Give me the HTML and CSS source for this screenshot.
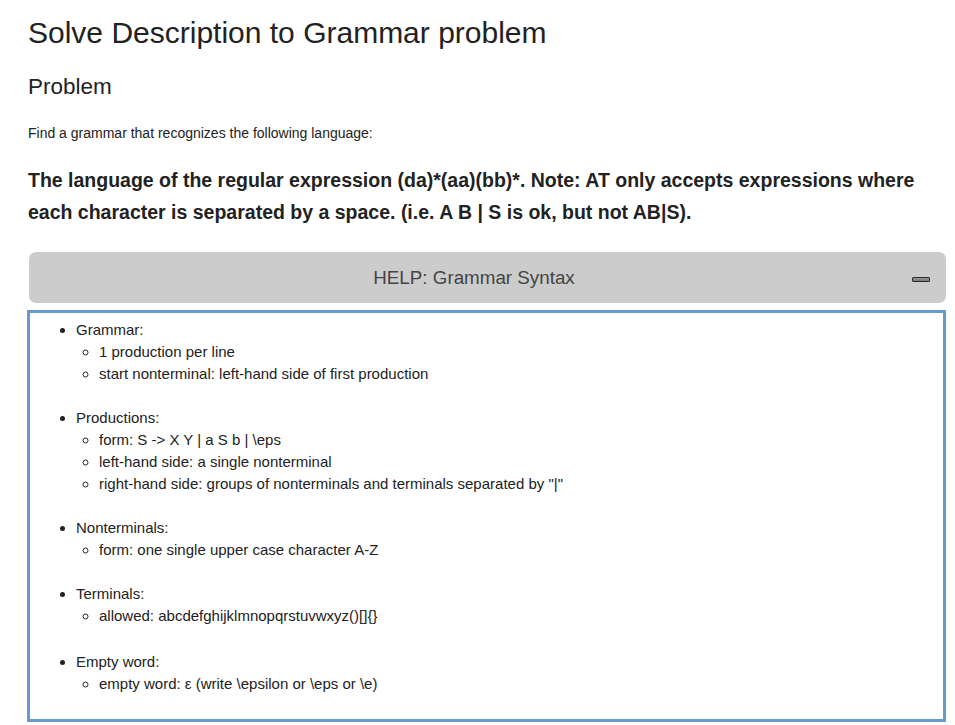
FILE: index.html
```html
<!DOCTYPE html>
<html>
<head>
<meta charset="utf-8">
<link rel="stylesheet" href="styles.css">
</head>
<body>
<div class="page">
  <h1 class="title">Solve Description to Grammar problem</h1>
  <h2 class="subtitle">Problem</h2>
  <p class="intro">Find a grammar that recognizes the following language:</p>
  <p class="task">The language of the regular expression (da)*(aa)(bb)*. Note: AT only accepts expressions where each character is separated by a space. (i.e. A B | S is ok, but not AB|S).</p>
  <div class="accordion">
    <div class="acc-header">
      <span class="acc-title">HELP: Grammar Syntax</span>
      <span class="acc-icon"></span>
    </div>
    <div class="acc-content">
      <ul class="help-list">
        <li>Grammar:
          <ul class="sub-list">
            <li>1 production per line</li>
            <li>start nonterminal: left-hand side of first production</li>
          </ul>
        </li>
        <li class="spacer"></li>
        <li>Productions:
          <ul class="sub-list">
            <li>form: S -&gt; X Y | a S b | \eps</li>
            <li>left-hand side: a single nonterminal</li>
            <li>right-hand side: groups of nonterminals and terminals separated by "|"</li>
          </ul>
        </li>
        <li class="spacer"></li>
        <li>Nonterminals:
          <ul class="sub-list">
            <li>form: one single upper case character A-Z</li>
          </ul>
        </li>
        <li class="spacer"></li>
        <li>Terminals:
          <ul class="sub-list">
            <li>allowed: abcdefghijklmnopqrstuvwxyz()[]{}</li>
          </ul>
        </li>
        <li class="spacer spacer-last"></li>
        <li>Empty word:
          <ul class="sub-list">
            <li>empty word: ε (write \epsilon or \eps or \e)</li>
          </ul>
        </li>
      </ul>
    </div>
  </div>
</div>
</body>
</html>
```

FILE: styles.css
```css
html, body {
  margin: 0;
  padding: 0;
  background: #ffffff;
}
body {
  font-family: "Liberation Sans", Arial, sans-serif;
  color: #222222;
}
.page {
  padding: 16px 9px 0 28px;
}
.title {
  font-size: 30px;
  line-height: 34px;
  font-weight: normal;
  margin: 0;
}
.subtitle {
  font-size: 22.5px;
  line-height: 26px;
  font-weight: normal;
  margin: 24px 0 0 0;
}
.intro {
  font-size: 14px;
  line-height: 18px;
  margin: 24px 0 0 0;
  color: #222;
}
.task {
  font-size: 19.5px;
  line-height: 32px;
  font-weight: bold;
  margin: 22px 0 0 0;
}
.accordion {
  margin-top: 24px;
}
.acc-header {
  margin-left: 1px;
  height: 51px;
  background: #cccccc;
  border-radius: 7px;
  display: flex;
  align-items: center;
  padding: 0 27px 0 0;
  position: relative;
}
.acc-title {
  flex: 1;
  text-align: center;
  font-size: 18.8px;
  color: #444444;
}
.acc-icon {
  position: absolute;
  right: 16px;
  top: 25px;
  width: 16px;
  height: 3px;
  border: 1px solid #2a2a2a;
  border-radius: 1px;
  background: linear-gradient(#9a9a9a, #777777);
}
.acc-content {
  margin-top: 7px;
  margin-left: -1px;
  border: 3px solid #6699cc;
  padding: 6px 0 24px 0;
}
.help-list {
  margin: 0;
  padding-left: 46px;
  font-size: 15px;
  line-height: 22px;
  color: #222;
  list-style: disc;
}
.help-list .spacer {
  list-style: none;
  height: 22px;
}
.help-list .spacer-last {
  height: 24px;
}
.sub-list {
  margin: 0;
  padding-left: 23px;
  list-style: circle;
}
```
